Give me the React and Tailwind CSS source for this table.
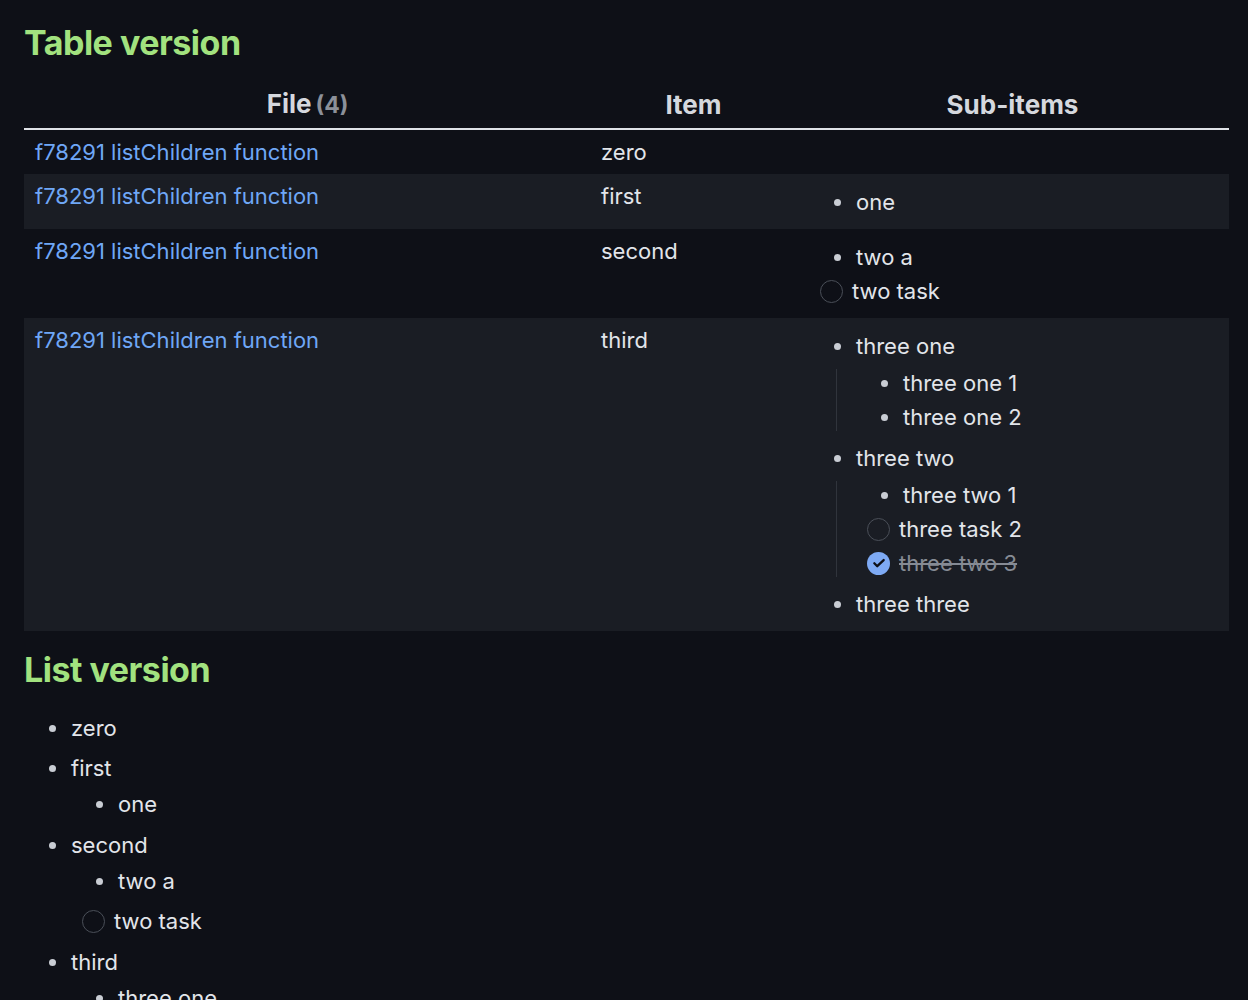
const rows = [
  { item: 'zero', subs: [] },
  { item: 'first', subs: [{ label: 'one' }] },
  { item: 'second', subs: [{ label: 'two a' }, { label: 'two task', task: 'open' }] },
  {
    item: 'third',
    subs: [
      { label: 'three one', children: [{ label: 'three one 1' }, { label: 'three one 2' }] },
      {
        label: 'three two',
        children: [
          { label: 'three two 1' },
          { label: 'three task 2', task: 'open' },
          { label: 'three two 3', task: 'done' },
        ],
      },
      { label: 'three three' },
    ],
  },
];

const listData = [
  { label: 'zero' },
  { label: 'first', children: [{ label: 'one' }] },
  { label: 'second', children: [{ label: 'two a' }, { label: 'two task', task: 'open' }] },
  {
    label: 'third',
    children: [
      { label: 'three one', children: [{ label: 'three one 1' }, { label: 'three one 2' }] },
    ],
  },
];

function Marker({ task }) {
  if (task === 'open') {
    return <span className="ml-[13px] mr-[9px] w-[23px] h-[23px] shrink-0 rounded-full border-[1.5px] border-[#4a4f58]" />;
  }
  if (task === 'done') {
    return (
      <span className="ml-[13px] mr-[9px] w-[23px] h-[23px] shrink-0 rounded-full bg-[#7eaaf4] flex items-center justify-center">
        <svg width="14" height="14" viewBox="0 0 24 24" fill="none" stroke="#0e1017" strokeWidth="4" strokeLinecap="round" strokeLinejoin="round">
          <path d="M4 12.5l5 5L20 7" />
        </svg>
      </span>
    );
  }
  return (
    <span className="w-[49px] shrink-0 flex justify-end pr-[15px]">
      <span className="w-[7px] h-[7px] rounded-full bg-[#c9cdd4]" />
    </span>
  );
}

// table lists are tighter than the plain list below
function Items({ items, table }) {
  const gap = table ? 'gap-[6px]' : 'gap-[12px]';
  return (
    <div className={`flex flex-col ${gap}`}>
      {items.map((it) => (
        <div key={it.label}>
          <div className="flex items-center leading-[28px]">
            <Marker task={it.task} />
            <span className={it.task === 'done' ? 'line-through text-[#868b94]' : ''}>{it.label}</span>
          </div>
          {it.children && (
            <div
              className={
                table
                  ? 'ml-[29px] border-l border-[#30343c] pl-[17px] mt-[9px] mb-[7px]'
                  : 'ml-[47px] mt-[8px] mb-[1px]'
              }
            >
              <Items items={it.children} table={table} />
            </div>
          )}
        </div>
      ))}
    </div>
  );
}

export default function App() {
  return (
    <div className="min-h-screen bg-[#0e1017] text-[#e2e5ea] text-[22px] pl-6 pr-[19px] pt-[22px] pb-10" style={{ fontFamily: 'Inter, "Noto Sans", sans-serif' }}>
      <h1 className="text-[34px] leading-[41px] font-bold tracking-[-0.5px] text-[#a2e27f]">Table version</h1>

      <table className="w-full mt-4 border-collapse">
        <thead>
          <tr className="border-b-2 border-[#dfe2e7]">
            <th className="w-[567px] pt-[10px] pb-[8px] text-[26px] leading-[30px] font-bold text-[#d5d8de]">
              File<span className="ml-[4px] text-[23px] text-[#8c9099]">(4)</span>
            </th>
            <th className="w-[205px] pt-[10px] pb-[8px] text-[26px] leading-[30px] font-bold text-[#d5d8de]">Item</th>
            <th className="pt-[10px] pb-[8px] text-[26px] leading-[30px] font-bold text-[#d5d8de]">Sub-items</th>
          </tr>
        </thead>
        <tbody>
          {rows.map((r, i) => (
            <tr key={r.item} className={i % 2 === 1 ? 'bg-[#1a1d24]' : ''}>
              <td className="align-top px-[11px] pt-[8px] pb-[8px] leading-[28px]">
                <a className="text-[#6fa7f6]">f78291 listChildren function</a>
              </td>
              <td className="align-top px-[10px] pt-[8px] pb-[8px] leading-[28px]">{r.item}</td>
              <td className="align-top px-[11px] pt-[8px] pb-[8px] leading-[28px]">
                {r.subs.length > 0 && (
                  <div className="mt-[6px] mb-[5px]">
                    <Items items={r.subs} table />
                  </div>
                )}
              </td>
            </tr>
          ))}
        </tbody>
      </table>

      <h2 className="mt-[18px] text-[34px] leading-[41px] font-bold tracking-[-0.5px] text-[#a2e27f]">List version</h2>
      <div className="mt-[24px] -ml-[2px]">
        <Items items={listData} />
      </div>
    </div>
  );
}
